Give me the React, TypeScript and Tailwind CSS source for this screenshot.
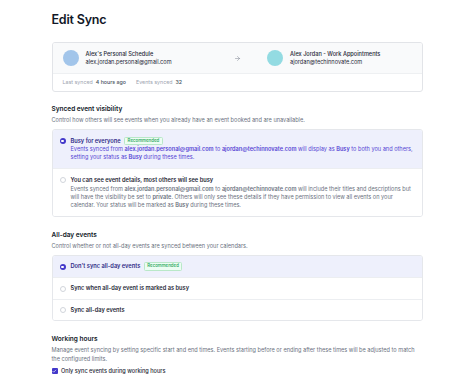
import { ArrowRight, Check } from 'lucide-react'

interface Option {
  title: string
  recommended?: boolean
  description?: React.ReactNode
}

const B = ({ children }: { children: React.ReactNode }) => <span className="font-semibold">{children}</span>

const visibilityOptions: Option[] = [
  {
    title: 'Busy for everyone',
    recommended: true,
    description: (
      <>
        Events synced from <B>alex.jordan.personal@gmail.com</B> to <B>ajordan@techinnovate.com</B> will display as{' '}
        <B>Busy</B> to both you and others, setting your status as <B>Busy</B> during these times.
      </>
    )
  },
  {
    title: 'You can see event details, most others will see busy',
    description: (
      <>
        Events synced from <B>alex.jordan.personal@gmail.com</B> to <B>ajordan@techinnovate.com</B> will include their
        titles and descriptions but will have the visibility be set to <B>private</B>. Others will only see these details
        if they have permission to view all events on your calendar. Your status will be marked as <B>Busy</B> during
        these times.
      </>
    )
  }
]

const allDayOptions: Option[] = [
  { title: "Don't sync all-day events", recommended: true },
  { title: 'Sync when all-day event is marked as busy' },
  { title: 'Sync all-day events' }
]

function Radio({ checked }: { checked: boolean }) {
  return checked ? (
    <span className="w-[6px] h-[6px] rounded-full bg-[#4338ca] flex items-center justify-center shrink-0">
      <span className="w-[2.4px] h-[2.4px] rounded-full bg-white" />
    </span>
  ) : (
    <span className="w-[6px] h-[6px] rounded-full border-[0.5px] border-[#d1d5db] bg-white shrink-0" />
  )
}

function Badge() {
  return (
    <span className="ml-[3.5px] px-[2.5px] rounded-[1.5px] border-[0.5px] border-[#b9e8c8] bg-[#ecfdf3] text-[#22a255] text-[4.4px] leading-[6.5px] font-medium">
      Recommended
    </span>
  )
}

function OptionList({ options, selected }: { options: Option[]; selected: number }) {
  return (
    <div className="mt-[5px] rounded-[3px] border-[0.5px] border-[#e5e7eb] overflow-hidden">
      {options.map((opt, i) => {
        const active = i === selected
        return (
          <div
            key={opt.title}
            className={`flex gap-[5px] px-[7px] ${opt.description ? 'py-[7px]' : 'items-center h-[21.5px]'} ${
              i > 0 ? 'border-t-[0.5px] border-[#eceef1]' : ''
            } ${active ? 'bg-[#eef0fc]' : 'bg-white'}`}
          >
            <div className={opt.description ? 'h-[8.2px] flex items-center' : 'flex items-center'}>
              <Radio checked={active} />
            </div>
            <div className="flex-1">
              <div className="flex items-center h-[8.2px]">
                <span className={`text-[5.7px] font-semibold ${active ? 'text-[#2e2a86]' : 'text-[#1f2937]'}`}>
                  {opt.title}
                </span>
                {opt.recommended && <Badge />}
              </div>
              {opt.description && (
                <p className={`text-[5.6px] leading-[8.2px] ${active ? 'text-[#5645d4]' : 'text-[#6b7280]'}`}>
                  {opt.description}
                </p>
              )}
            </div>
          </div>
        )
      })}
    </div>
  )
}

function Section({
  title,
  description,
  className,
  children
}: {
  title: string
  description: string
  className: string
  children: React.ReactNode
}) {
  return (
    <div className={className}>
      <h2 className="text-[6.5px] leading-[9px] font-semibold text-[#111827]">{title}</h2>
      <p className="mt-[2px] text-[5.6px] leading-[8.3px] text-[#6b7280]">{description}</p>
      {children}
    </div>
  )
}

export default function App() {
  return (
    <div className="min-h-screen bg-white" style={{ fontFamily: 'Inter, "Noto Sans", sans-serif' }}>
      <div className="w-[371px] mx-auto pt-[12px]">
        <h1 className="text-[12.5px] leading-[16px] font-semibold text-[#111827] tracking-[-0.2px]">Edit Sync</h1>

        <div className="mt-[14px] rounded-[3px] border-[0.5px] border-[#e2e4e8] overflow-hidden">
          <div className="h-[30px] bg-[#f9fafb] px-[10px] grid grid-cols-[1fr_60px_1fr] items-center">
            <div className="flex items-center gap-[7px]">
              <div className="w-[16px] h-[16px] rounded-full bg-[#a2c5ea]" />
              <div className="text-[5.6px] leading-[8.4px] text-[#1f2937]">
                <div className="font-medium">Alex's Personal Schedule</div>
                <div>alex.jordan.personal@gmail.com</div>
              </div>
            </div>
            <div className="flex justify-center">
              <ArrowRight className="w-[7px] h-[7px] text-[#6b7280]" strokeWidth={1.5} />
            </div>
            <div className="flex items-center gap-[7px]">
              <div className="w-[16px] h-[16px] rounded-full bg-[#93dbe2]" />
              <div className="text-[5.6px] leading-[8.4px] text-[#1f2937]">
                <div className="font-medium">Alex Jordan - Work Appointments</div>
                <div>ajordan@techinnovate.com</div>
              </div>
            </div>
          </div>
          <div className="h-[18px] px-[10px] flex items-center gap-[10px] text-[5.3px] border-t-[0.5px] border-[#eef0f2]">
            <span>
              <span className="text-[#9ca3af]">Last synced</span>
              <span className="ml-[3px] text-[#4b5563] font-medium">4 hours ago</span>
            </span>
            <span>
              <span className="text-[#9ca3af]">Events synced</span>
              <span className="ml-[3px] text-[#4b5563] font-medium">32</span>
            </span>
          </div>
        </div>

        <Section
          className="mt-[12.5px]"
          title="Synced event visibility"
          description="Control how others will see events when you already have an event booked and are unavailable."
        >
          <OptionList options={visibilityOptions} selected={0} />
        </Section>

        <Section
          className="mt-[13.5px]"
          title="All-day events"
          description="Control whether or not all-day events are synced between your calendars."
        >
          <OptionList options={allDayOptions} selected={0} />
        </Section>

        <Section
          className="mt-[14px]"
          title="Working hours"
          description="Manage event syncing by setting specific start and end times. Events starting before or ending after these times will be adjusted to match the configured limits."
        >
          <label className="mt-[4px] flex items-center gap-[3.5px]">
            <span className="w-[6px] h-[6px] rounded-[1px] bg-[#4338ca] flex items-center justify-center">
              <Check className="w-[4.5px] h-[4.5px] text-white" strokeWidth={3.5} />
            </span>
            <span className="text-[5.6px] font-medium text-[#1f2937]">Only sync events during working hours</span>
          </label>
        </Section>
      </div>
    </div>
  )
}
